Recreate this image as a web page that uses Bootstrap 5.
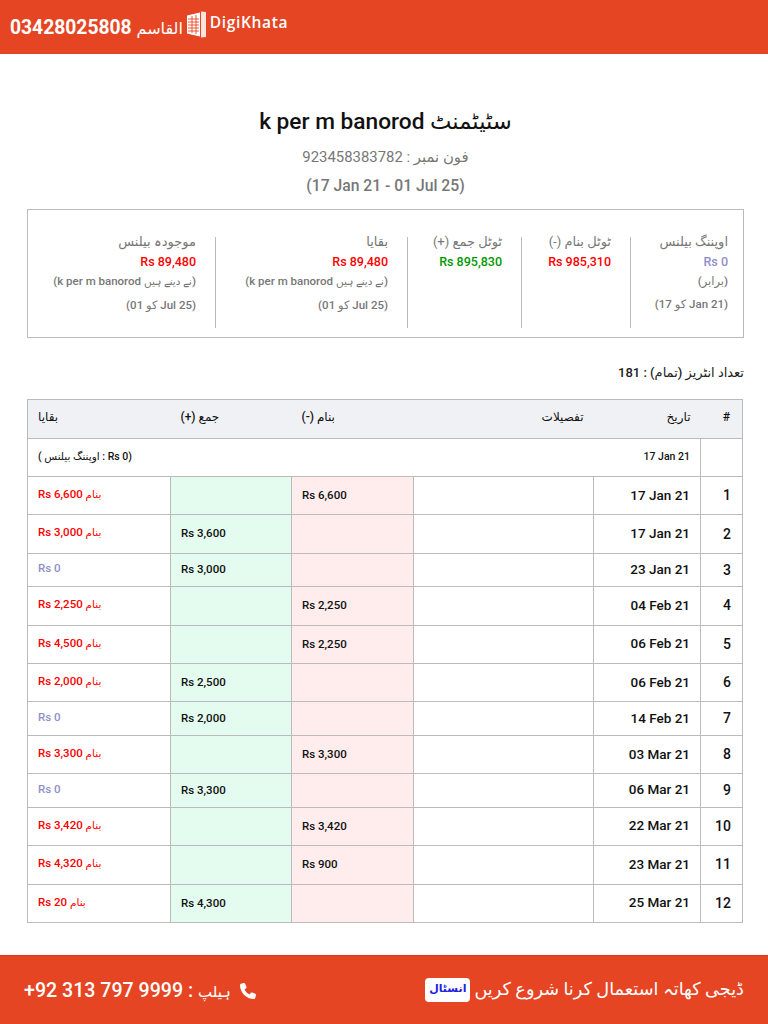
<!DOCTYPE html>
<html lang="ur">
<head>
<meta charset="utf-8">
<link rel="stylesheet" href="https://cdn.jsdelivr.net/npm/bootstrap@5.3.0/dist/css/bootstrap.min.css">
<style>
html,body{height:1024px;overflow:hidden}
body{font-family:Roboto,"DejaVu Sans",sans-serif;color:#111;background:#fff;display:flex;flex-direction:column}
.topbar{background:#e64524;color:#fff;height:54px;padding:0 10px;gap:4px}
.topbar-phone{font-size:19.3px;font-weight:700;line-height:1;padding-top:1px}
.topbar-urdu{font-size:16px;font-weight:400}
.topbar-brand{font-family:"Open Sans","DejaVu Sans",sans-serif;font-size:15.6px;font-weight:600;letter-spacing:.6px;margin-top:-9px}
.logo-mark{width:19px;height:27px;margin-top:-6px}
.page-main{flex:1 1 auto;padding:0 24px 0 27px}
.st-title{font-size:22.7px;font-weight:500;margin:54px 0 0;line-height:28px;color:#111}
.st-phone{font-size:14.9px;color:#777;margin:11px 0 0;line-height:20px}
.st-range{font-size:15.7px;font-weight:500;color:#777;margin:9px 0 0;line-height:20px}
.sumbox{border:1px solid #bbb;margin-top:13px;height:129px;padding:27px 0 8px 0}
.sumcol{border-left:1px solid #bbb;height:91px;padding:0 19px 0 0;font-size:12px;color:#777;line-height:22.5px;flex:0 0 auto;text-align:right}
.sumcol:last-child{border-left:0}
.sc-a{width:113px;padding-right:15px}.sc-b{width:109px}.sc-c{width:114px}.sc-d{width:192px}.sc-e{width:181px}
.sumlabel{font-size:13px;line-height:12px;padding-bottom:3px;font-weight:400;margin-top:-1px}
.sumval{font-size:12.5px;font-weight:500;line-height:21px;margin-bottom:-2px}
.val-red{color:#f00}.val-green{color:#090}.val-blue{color:#8f8fc8}
.sumsub{font-size:11.5px;font-weight:500;color:#777}
.sub-urdu{font-size:10.5px;font-weight:400}
.entrycount{font-size:13px;font-weight:500;margin:25px 0 0;line-height:20px;text-align:right;color:#222}
.ledger{table-layout:fixed;width:715px;margin:16px 0 0;border-collapse:collapse;direction:rtl}
.ledger td,.ledger th{border:1px solid #bbb;padding:0 10px;vertical-align:middle;color:#111;background:transparent;box-shadow:none}
.ledger th{background:#f0f1f5;font-size:12px;font-weight:500;height:39px;border-left:0;border-right:0;text-align:right;padding-bottom:4px}
.ledger th:first-child{border-right:1px solid #bbb;padding-right:12px}
.ledger th:last-child{border-left:1px solid #bbb}
.ledger th.head-left{text-align:left}
.w-no{width:42px}.w-date{width:107px}.w-det{width:180px}.w-out{width:122px}.w-in{width:121px}.w-bal{width:143px}
.ledger .row-tall td{height:38.4px}
.ledger .row-short td{height:33.5px}
.ledger .cell-no{font-size:14px;font-weight:500;text-align:right;padding:0 11px 0 0}
.ledger .cell-date{font-size:13.5px;font-weight:500;text-align:right;direction:ltr;padding-bottom:2px}
.ledger .cell-amt{font-size:11.5px;font-weight:500;text-align:left;direction:ltr}
.ledger .cell-bal{font-size:11.5px;font-weight:500;text-align:left;padding-bottom:2px}
.ledger td.val-red{color:#f00}
.ledger td.val-blue{color:#8f8fc8}
.ledger .cell-out{background:#ffeded}
.ledger .cell-in{background:#e3fcef}
.ledger .openrow td{height:38px;font-size:10.5px;font-weight:500;padding-bottom:1px}
.ledger .openrow .cell-blank{border-top:0;border-bottom:0}
.bal-tag{font-weight:400;font-size:10.5px;color:#f00}
.bottombar{background:#e64524;color:#fff;height:69px;padding:0 24px;margin-bottom:0;border-top:1px solid #d93a1c}
.bb-text{font-size:17.7px;font-weight:400;line-height:1}
.bb-help{font-size:19.6px;font-weight:500;line-height:1;gap:9px;padding-top:2px}
.bb-urdu{font-size:15px;font-weight:400}
.install-tag{background:#fff;color:#2222dd;font-size:11px;font-weight:700;border-radius:4px;padding:4px 4px 6px;line-height:14px}
</style>
</head>
<body>
<header class="topbar d-flex align-items-center flex-shrink-0">
  <span class="topbar-phone" dir="rtl"><span class="topbar-urdu">القاسم</span> 03428025808</span>
  <svg class="logo-mark" viewBox="0 0 19 27" fill="#fff" aria-hidden="true">
    <path d="M0 4.500 13 1.500V25.500L0 22.500Z"/>
    <path d="M14 0.500 19 1V26L14 26.500Z" opacity=".85"/>
    <g stroke="#e64524" stroke-width=".9"><path d="M1 8H12M1 11H12M1 14H12M1 17H12M1 20H12M5 5V22M9 4V23"/></g>
  </svg>
  <span class="topbar-brand">DigiKhata</span>
</header>
<main class="page-main">
  <h1 class="st-title text-center" dir="rtl">سٹیٹمنٹ k per m banorod</h1>
  <p class="st-phone text-center" dir="rtl">فون نمبر : 923458383782</p>
  <p class="st-range text-center">(17 Jan 21 - 01 Jul 25)</p>
  <section class="sumbox d-flex" dir="rtl">
    <div class="sumcol sc-a"><div class="sumlabel">اوپننگ بیلنس</div><div class="sumval val-blue">Rs 0</div><div class="sumsub">(برابر)</div><div class="sumsub">(Jan 21 کو 17)</div></div>
    <div class="sumcol sc-b"><div class="sumlabel">ٹوٹل بنام (-)</div><div class="sumval val-red">Rs 985,310</div></div>
    <div class="sumcol sc-c"><div class="sumlabel">ٹوٹل جمع (+)</div><div class="sumval val-green">Rs 895,830</div></div>
    <div class="sumcol sc-d"><div class="sumlabel">بقایا</div><div class="sumval val-red">Rs 89,480</div><div class="sumsub">(<span class="sub-urdu">نے دینے ہیں</span> k per m banorod)</div><div class="sumsub">(Jul 25 کو 01)</div></div>
    <div class="sumcol sc-e"><div class="sumlabel">موجودہ بیلنس</div><div class="sumval val-red">Rs 89,480</div><div class="sumsub">(<span class="sub-urdu">نے دینے ہیں</span> k per m banorod)</div><div class="sumsub">(Jul 25 کو 01)</div></div>
  </section>
  <p class="entrycount" dir="rtl">تعداد انٹریز (تمام) : 181</p>
  <table class="table ledger">
    <colgroup><col class="w-no"><col class="w-date"><col class="w-det"><col class="w-out"><col class="w-in"><col class="w-bal"></colgroup>
    <thead><tr><th>#</th><th>تاریخ</th><th>تفصیلات</th><th class="head-left">بنام (-)</th><th class="head-left">جمع (+)</th><th class="head-left">بقایا</th></tr></thead>
    <tbody>
      <tr class="openrow"><td class="cell-blank"></td><td colspan="5"><div class="d-flex justify-content-between" dir="ltr"><span>( اوپننگ بیلنس : Rs 0)</span><span>17 Jan 21</span></div></td></tr>
      <tr class="row-tall"><td class="cell-no">1</td><td class="cell-date">17 Jan 21</td><td></td><td class="cell-amt cell-out">Rs 6,600</td><td class="cell-in"></td><td class="cell-bal val-red"><span class="bal-tag">بنام</span> Rs 6,600</td></tr>
      <tr class="row-tall"><td class="cell-no">2</td><td class="cell-date">17 Jan 21</td><td></td><td class="cell-out"></td><td class="cell-amt cell-in">Rs 3,600</td><td class="cell-bal val-red"><span class="bal-tag">بنام</span> Rs 3,000</td></tr>
      <tr class="row-short"><td class="cell-no">3</td><td class="cell-date">23 Jan 21</td><td></td><td class="cell-out"></td><td class="cell-amt cell-in">Rs 3,000</td><td class="cell-bal val-blue">Rs 0</td></tr>
      <tr class="row-tall"><td class="cell-no">4</td><td class="cell-date">04 Feb 21</td><td></td><td class="cell-amt cell-out">Rs 2,250</td><td class="cell-in"></td><td class="cell-bal val-red"><span class="bal-tag">بنام</span> Rs 2,250</td></tr>
      <tr class="row-tall"><td class="cell-no">5</td><td class="cell-date">06 Feb 21</td><td></td><td class="cell-amt cell-out">Rs 2,250</td><td class="cell-in"></td><td class="cell-bal val-red"><span class="bal-tag">بنام</span> Rs 4,500</td></tr>
      <tr class="row-tall"><td class="cell-no">6</td><td class="cell-date">06 Feb 21</td><td></td><td class="cell-out"></td><td class="cell-amt cell-in">Rs 2,500</td><td class="cell-bal val-red"><span class="bal-tag">بنام</span> Rs 2,000</td></tr>
      <tr class="row-short"><td class="cell-no">7</td><td class="cell-date">14 Feb 21</td><td></td><td class="cell-out"></td><td class="cell-amt cell-in">Rs 2,000</td><td class="cell-bal val-blue">Rs 0</td></tr>
      <tr class="row-tall"><td class="cell-no">8</td><td class="cell-date">03 Mar 21</td><td></td><td class="cell-amt cell-out">Rs 3,300</td><td class="cell-in"></td><td class="cell-bal val-red"><span class="bal-tag">بنام</span> Rs 3,300</td></tr>
      <tr class="row-short"><td class="cell-no">9</td><td class="cell-date">06 Mar 21</td><td></td><td class="cell-out"></td><td class="cell-amt cell-in">Rs 3,300</td><td class="cell-bal val-blue">Rs 0</td></tr>
      <tr class="row-tall"><td class="cell-no">10</td><td class="cell-date">22 Mar 21</td><td></td><td class="cell-amt cell-out">Rs 3,420</td><td class="cell-in"></td><td class="cell-bal val-red"><span class="bal-tag">بنام</span> Rs 3,420</td></tr>
      <tr class="row-tall"><td class="cell-no">11</td><td class="cell-date">23 Mar 21</td><td></td><td class="cell-amt cell-out">Rs 900</td><td class="cell-in"></td><td class="cell-bal val-red"><span class="bal-tag">بنام</span> Rs 4,320</td></tr>
      <tr class="row-tall"><td class="cell-no">12</td><td class="cell-date">25 Mar 21</td><td></td><td class="cell-out"></td><td class="cell-amt cell-in">Rs 4,300</td><td class="cell-bal val-red"><span class="bal-tag">بنام</span> Rs 20</td></tr>
    </tbody>
  </table>
</main>
<footer class="bottombar d-flex align-items-center justify-content-between flex-shrink-0">
  <div class="bb-help d-flex align-items-center">
    <span dir="ltr">+92 313 797 9999 : <span class="bb-urdu">ہیلپ</span></span>
    <svg width="16" height="16" viewBox="0 0 512 512" fill="#fff" aria-hidden="true"><path d="M164.900 24.600c-7.700-18.600-28-28.500-47.400-23.200l-88 24C12.100 30.200 0 46 0 64C0 311.400 200.600 512 448 512c18 0 33.800-12.100 38.600-29.500l24-88c5.300-19.400-4.600-39.700-23.200-47.400l-96-40c-16.300-6.800-35.200-2.100-46.300 11.600L304.700 368C234.300 334.700 177.300 277.700 144 207.300L193.300 167c13.700-11.200 18.400-30 11.600-46.300l-40-96z"/></svg>
  </div>
  <div class="d-flex align-items-center gap-1" dir="rtl">
    <span class="bb-text">ڈیجی کھاتہ استعمال کرنا شروع کریں</span>
    <span class="install-tag">انسٹال</span>
  </div>
</footer>
<script src="https://cdn.jsdelivr.net/npm/bootstrap@5.3.0/dist/js/bootstrap.bundle.min.js"></script>
</body>
</html>
